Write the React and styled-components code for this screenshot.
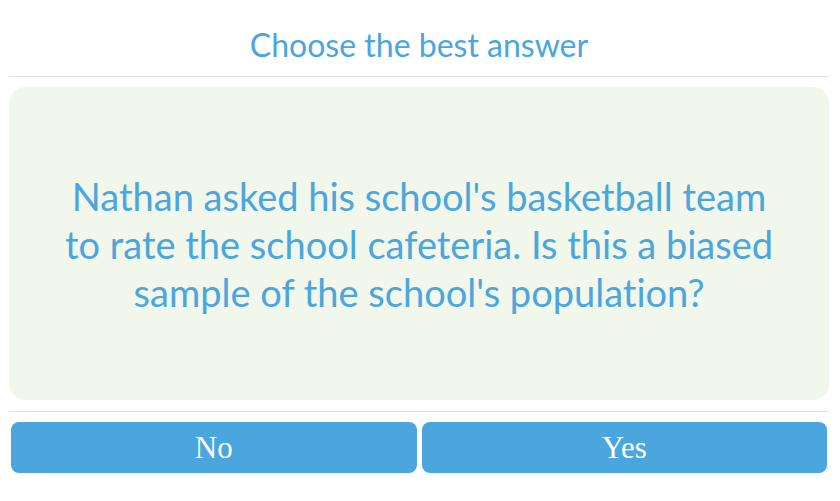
import React from 'react'
import styled, { createGlobalStyle } from 'styled-components'

const GlobalStyle = createGlobalStyle`
  html, body {
    margin: 0;
    padding: 0;
    background: #ffffff;
  }
`

const Page = styled.div`
  width: 840px;
  height: 501px;
  box-sizing: border-box;
  padding: 0 11px 0 9px;
  display: flex;
  flex-direction: column;
  font-family: Lato, "Open Sans", sans-serif;
  font-variant-ligatures: none;
`

const Header = styled.div`
  height: 77px;
  display: flex;
  align-items: center;
  justify-content: center;
  padding-top: 12px;
  box-sizing: border-box;
  color: #4aa6dc;
  font-size: 32px;
  border-bottom: 1px solid #e2e2e2;
`

const Card = styled.div`
  margin-top: 10px;
  height: 313px;
  background: #f2f7ec;
  border-radius: 16px;
  display: flex;
  align-items: center;
  justify-content: center;
  padding: 0 50px;
  box-sizing: border-box;
`

const Question = styled.p`
  margin: 0;
  text-align: center;
  color: #4aa6dc;
  font-size: 38px;
  line-height: 48px;
`

const Divider = styled.div`
  margin-top: 11px;
  border-top: 1px solid #dde3ea;
`

const Answers = styled.div`
  margin-top: 10px;
  padding: 0 2px;
  display: grid;
  grid-template-columns: 1fr 1fr;
  gap: 5px;
`

const AnswerButton = styled.button`
  height: 51px;
  border: none;
  border-radius: 8px;
  background: #4aa6dc;
  color: #ffffff;
  font-family: "Liberation Serif", "Times New Roman", serif;
  font-size: 31px;
  cursor: pointer;
  padding: 0;
`

export default function App() {
  return (
    <>
      <GlobalStyle />
      <Page>
        <Header>Choose the best answer</Header>
        <Card>
          <Question>
            Nathan asked his school's basketball team to rate the school cafeteria. Is this a biased sample of the school's population?
          </Question>
        </Card>
        <Divider />
        <Answers>
          <AnswerButton>No</AnswerButton>
          <AnswerButton>Yes</AnswerButton>
        </Answers>
      </Page>
    </>
  )
}
